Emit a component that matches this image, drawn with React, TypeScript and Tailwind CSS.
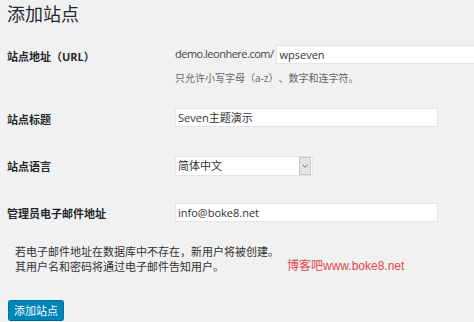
export default function App() {
  return (
    <div
      className="w-[474px] h-[322px] overflow-hidden bg-[#f1f1f1] text-[#23282d] [text-spacing-trim:space-all]"
      style={{ fontFamily: '"Open Sans", "Noto Sans CJK SC", sans-serif' }}
    >
      <h1 className="pl-[7px] pt-[3px] text-[18px] leading-[22px] font-normal">添加站点</h1>

      {/* 站点地址 */}
      <div className="mt-[20px] grid grid-cols-[175px_1fr]">
        <div className="pl-[7px] mt-[2px] text-[11px] leading-[19px] font-bold">站点地址（URL）</div>
        <div>
          <div className="flex items-center text-[11px] text-[#444]">
            <span className="tracking-[-0.5px]">demo.leonhere.com/</span>
            <div className="ml-[2px] h-[19px] w-[230px] shrink-0 bg-white border border-[#e4e4e4] pl-[3px] leading-[17px] text-[#333]">
              wpseven
            </div>
          </div>
          <p className="mt-[7px] text-[10px] leading-[15px] text-[#666]">只允许小写字母（a-z）、数字和连字符。</p>
        </div>
      </div>

      {/* 站点标题 */}
      <div className="mt-[22px] grid grid-cols-[175px_1fr]">
        <div className="pl-[7px] mt-[2px] text-[11px] leading-[19px] font-bold">站点标题</div>
        <div className="h-[19px] w-[263px] bg-white border border-[#e4e4e4] pl-[2px] text-[11px] leading-[17px] text-[#333]">
          Seven主题演示
        </div>
      </div>

      {/* 站点语言 */}
      <div className="mt-[27px] grid grid-cols-[175px_1fr]">
        <div className="pl-[7px] mt-[1px] text-[11px] leading-[20px] font-bold">站点语言</div>
        <div className="h-[20px] w-[138px] bg-white border border-[#e4e4e4] flex items-center justify-between">
          <span className="pl-[2px] text-[11px] text-[#333]">简体中文</span>
          <span className="mr-[1px] h-[18px] w-[12px] bg-[#e4e4e4] border border-[#c4c4c4] flex items-center justify-center">
            <svg width="6" height="4" viewBox="0 0 6 4">
              <path d="M0.5 0.8 L3 3.2 L5.5 0.8" fill="none" stroke="#666" strokeWidth="1" />
            </svg>
          </span>
        </div>
      </div>

      {/* 管理员电子邮件地址 */}
      <div className="mt-[26px] grid grid-cols-[175px_1fr]">
        <div className="pl-[7px] mt-[1px] text-[11px] leading-[19px] font-bold">管理员电子邮件地址</div>
        <div className="h-[19px] w-[263px] bg-white border border-[#e4e4e4] pl-[2px] text-[11px] leading-[17px] text-[#333]">
          info@boke8.net
        </div>
      </div>

      <div className="mt-[21px] flex items-end">
        <div className="pl-[15px] w-[287px] text-[11px] leading-[15px] text-[#333]">
          <p>若电子邮件地址在数据库中不存在，新用户将被创建。</p>
          <p>其用户名和密码将通过电子邮件告知用户。</p>
        </div>
        <span
          className="text-[12px] leading-[15px] text-[#e2474b]"
          style={{ fontFamily: '"Liberation Sans", "Noto Sans CJK SC", sans-serif' }}
        >
          博客吧www.boke8.net
        </span>
      </div>

      <button className="mt-[26px] ml-[8px] h-[21px] px-[5px] rounded-[3px] bg-[#0085ba] border border-[#0073aa] border-b-[#006799] text-white text-[11px] leading-[19px]">
        添加站点
      </button>
    </div>
  )
}
